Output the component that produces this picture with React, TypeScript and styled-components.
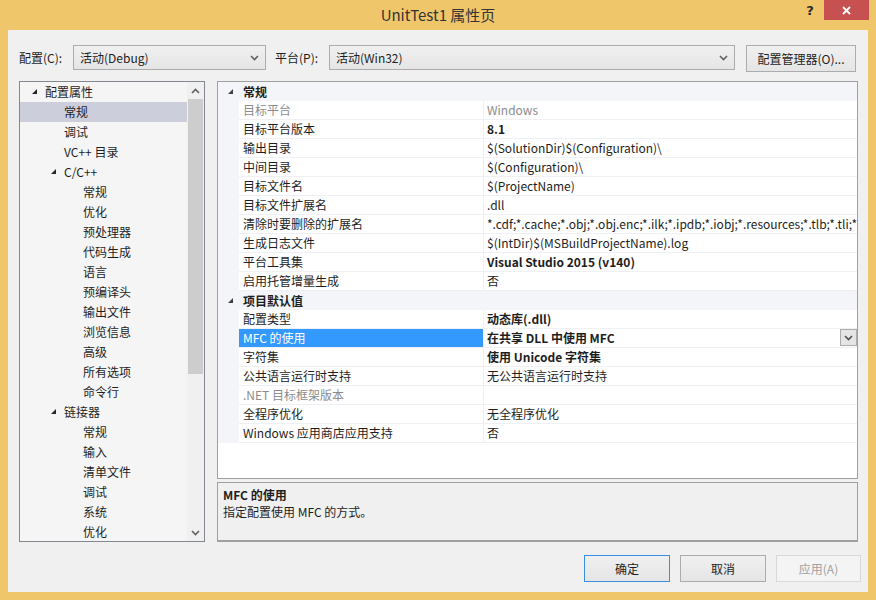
import * as React from 'react'
import styled, { createGlobalStyle } from 'styled-components'

const GlobalStyle = createGlobalStyle`
  html, body {
    margin: 0;
    padding: 0;
    background: #f0c66a;
  }
  body {
    font-family: "Noto Sans CJK SC", "Noto Sans", sans-serif;
    font-size: 12px;
    color: #1e1e1e;
  }
`

const Frame = styled.div`
  width: 876px;
  height: 600px;
  box-sizing: border-box;
  background: #f0c66a;
  display: flex;
  flex-direction: column;
`

const TitleBar = styled.div`
  height: 30px;
  display: grid;
  grid-template-columns: 1fr auto 1fr;
  align-items: start;
`

const Title = styled.div`
  grid-column: 2;
  font-size: 15px;
  line-height: 30px;
  color: #333;
`

const Controls = styled.div`
  grid-column: 3;
  justify-self: end;
  display: flex;
  align-items: flex-start;
  padding-right: 7px;
`

const HelpButton = styled.div`
  width: 28px;
  height: 20px;
  line-height: 22px;
  text-align: center;
  font-family: "DejaVu Sans", sans-serif;
  font-weight: bold;
  font-size: 13px;
  color: #2b2b2b;
`

const CloseButton = styled.div`
  width: 45px;
  height: 20px;
  background: #c75050;
  display: flex;
  align-items: center;
  justify-content: center;
`

const Client = styled.div`
  flex: 1;
  margin: 0 8px 8px 8px;
  background: #f0f0f0;
  padding: 15px 10px 0 11px;
  display: flex;
  flex-direction: column;
`

const ConfigBar = styled.div`
  display: flex;
  align-items: flex-start;
  height: 27px;
`

const FieldLabel = styled.div<{ $width: number }>`
  width: ${p => p.$width}px;
  line-height: 25px;
  flex-shrink: 0;
`

const Combo = styled.div<{ $width: number }>`
  width: ${p => p.$width}px;
  height: 25px;
  box-sizing: border-box;
  border: 1px solid #acacac;
  background: linear-gradient(#f0f0f0, #e5e5e5);
  display: flex;
  align-items: center;
  justify-content: space-between;
  padding: 0 6px 0 6px;
  margin-right: 9px;
  flex-shrink: 0;
`

const PushButton = styled.div<{ $width: number; $focused?: boolean; $disabled?: boolean }>`
  width: ${p => p.$width}px;
  height: 27px;
  box-sizing: border-box;
  border: 1px solid ${p => (p.$focused ? '#3c8fe0' : p.$disabled ? '#d9d9d9' : '#acacac')};
  background: ${p => (p.$disabled ? '#f4f4f4' : 'linear-gradient(#f0f0f0, #e5e5e5)')};
  color: ${p => (p.$disabled ? '#a0a0a0' : '#1e1e1e')};
  display: flex;
  align-items: center;
  justify-content: center;
  flex-shrink: 0;
`

const ManagerButton = styled(PushButton)`
  margin-left: 2px;
`

const Main = styled.div`
  margin-top: 9px;
  height: 461px;
  display: flex;
  gap: 12px;
`

const TreePanel = styled.div`
  width: 186px;
  box-sizing: border-box;
  border: 1px solid #828790;
  background: #f5f5f5;
  display: flex;
  overflow: hidden;
`

const TreeList = styled.div`
  flex: 1;
  overflow: hidden;
`

const TreeRow = styled.div<{ $level: number; $selected?: boolean }>`
  height: 20px;
  box-sizing: border-box;
  padding-bottom: 2px;
  display: flex;
  align-items: center;
  padding-left: ${p => 11 + p.$level * 19}px;
  background: ${p => (p.$selected ? '#cccedb' : 'transparent')};
  white-space: nowrap;
`

const Expander = styled.div`
  width: 14px;
  height: 18px;
  display: flex;
  align-items: center;
  flex-shrink: 0;
`

const ScrollBar = styled.div`
  width: 17px;
  background: #f0f0f0;
  display: flex;
  flex-direction: column;
  flex-shrink: 0;
`

const ScrollArrow = styled.div`
  height: 17px;
  display: flex;
  align-items: center;
  justify-content: center;
`

const ScrollTrack = styled.div`
  flex: 1;
  display: flex;
  flex-direction: column;
`

const ScrollThumb = styled.div<{ $height: number }>`
  height: ${p => p.$height}px;
  margin: 0 1px;
  background: #cdcdcd;
`

const RightColumn = styled.div`
  width: 641px;
  display: flex;
  flex-direction: column;
  gap: 3px;
`

const Grid = styled.div`
  height: 398px;
  box-sizing: border-box;
  border: 1px solid #a0a0a0;
  background: #fff;
  overflow: hidden;
`

const CategoryRow = styled.div`
  height: 19px;
  display: flex;
  align-items: center;
  background: #f3f5f9;
  font-weight: bold;
  color: #1e1e1e;
`

const CategoryToggle = styled.div`
  width: 21px;
  height: 19px;
  display: flex;
  align-items: center;
  padding-left: 9px;
  box-sizing: border-box;
`

const CategoryTitle = styled.span`
  padding-left: 4px;
`

const PropRow = styled.div`
  height: 19px;
  display: flex;
`

const Gutter = styled.div`
  width: 21px;
  background: #f3f5f9;
  flex-shrink: 0;
`

const NameCell = styled.div<{ $selected?: boolean; $muted?: boolean }>`
  width: 245px;
  box-sizing: border-box;
  padding-left: 4px;
  border-bottom: 1px solid #eef0f3;
  border-right: 1px solid #eef0f3;
  background: ${p => (p.$selected ? '#3399ff' : '#fff')};
  color: ${p => (p.$selected ? '#fff' : p.$muted ? '#8c8c8c' : '#1e1e1e')};
  line-height: 18px;
  white-space: nowrap;
  overflow: hidden;
  flex-shrink: 0;
`

const ValueCell = styled.div<{ $bold?: boolean; $muted?: boolean }>`
  flex: 1;
  min-width: 0;
  box-sizing: border-box;
  padding-left: 3px;
  border-bottom: 1px solid #eef0f3;
  font-weight: ${p => (p.$bold ? 'bold' : 'normal')};
  color: ${p => (p.$muted ? '#8c8c8c' : '#1e1e1e')};
  line-height: 18px;
  white-space: nowrap;
  overflow: hidden;
  display: flex;
  justify-content: space-between;
`

const DropButton = styled.div`
  width: 17px;
  height: 17px;
  box-sizing: border-box;
  border: 1px solid #acacac;
  background: #e5e5e5;
  display: flex;
  align-items: center;
  justify-content: center;
  flex-shrink: 0;
`

const Description = styled.div`
  height: 60px;
  box-sizing: border-box;
  border: 1px solid #a0a0a0;
  border-bottom: 2px solid #a0a0a0;
  background: #f0f0f0;
  padding: 3px 5px;
  line-height: 17px;
`

const DescTitle = styled.div`
  font-weight: bold;
`

const Footer = styled.div`
  margin-top: 13px;
  margin-right: -3px;
  display: flex;
  justify-content: flex-end;
  gap: 10px;
`

const Triangle = ({ color = '#262626' }: { color?: string }) => (
  <svg width="7" height="7" viewBox="0 0 7 7">
    <polygon points="6,1 6,6 1,6" fill={color} />
  </svg>
)

const Chevron = ({ up = false, color = '#606060' }: { up?: boolean; color?: string }) => (
  <svg width="9" height="6" viewBox="0 0 9 6">
    <polyline points={up ? '1,5 4.5,1.5 8,5' : '1,1 4.5,4.5 8,1'} fill="none" stroke={color} strokeWidth="1.6" />
  </svg>
)

interface TreeItem {
  label: string
  level: number
  expanded?: boolean
  selected?: boolean
}

const treeItems: TreeItem[] = [
  { label: '配置属性', level: 0, expanded: true },
  { label: '常规', level: 1, selected: true },
  { label: '调试', level: 1 },
  { label: 'VC++ 目录', level: 1 },
  { label: 'C/C++', level: 1, expanded: true },
  { label: '常规', level: 2 },
  { label: '优化', level: 2 },
  { label: '预处理器', level: 2 },
  { label: '代码生成', level: 2 },
  { label: '语言', level: 2 },
  { label: '预编译头', level: 2 },
  { label: '输出文件', level: 2 },
  { label: '浏览信息', level: 2 },
  { label: '高级', level: 2 },
  { label: '所有选项', level: 2 },
  { label: '命令行', level: 2 },
  { label: '链接器', level: 1, expanded: true },
  { label: '常规', level: 2 },
  { label: '输入', level: 2 },
  { label: '清单文件', level: 2 },
  { label: '调试', level: 2 },
  { label: '系统', level: 2 },
  { label: '优化', level: 2 },
]

interface Prop {
  name: string
  value: string
  bold?: boolean
  muted?: boolean
  selected?: boolean
}

interface Category {
  title: string
  props: Prop[]
}

const categories: Category[] = [
  {
    title: '常规',
    props: [
      { name: '目标平台', value: 'Windows', muted: true },
      { name: '目标平台版本', value: '8.1', bold: true },
      { name: '输出目录', value: '$(SolutionDir)$(Configuration)\\' },
      { name: '中间目录', value: '$(Configuration)\\' },
      { name: '目标文件名', value: '$(ProjectName)' },
      { name: '目标文件扩展名', value: '.dll' },
      { name: '清除时要删除的扩展名', value: '*.cdf;*.cache;*.obj;*.obj.enc;*.ilk;*.ipdb;*.iobj;*.resources;*.tlb;*.tli;*.tlh;*.tmp' },
      { name: '生成日志文件', value: '$(IntDir)$(MSBuildProjectName).log' },
      { name: '平台工具集', value: 'Visual Studio 2015 (v140)', bold: true },
      { name: '启用托管增量生成', value: '否' },
    ],
  },
  {
    title: '项目默认值',
    props: [
      { name: '配置类型', value: '动态库(.dll)', bold: true },
      { name: 'MFC 的使用', value: '在共享 DLL 中使用 MFC', bold: true, selected: true },
      { name: '字符集', value: '使用 Unicode 字符集', bold: true },
      { name: '公共语言运行时支持', value: '无公共语言运行时支持' },
      { name: '.NET 目标框架版本', value: '', muted: true },
      { name: '全程序优化', value: '无全程序优化' },
      { name: 'Windows 应用商店应用支持', value: '否' },
    ],
  },
]

export default function App() {
  return (
    <Frame>
      <GlobalStyle />
      <TitleBar>
        <Title>UnitTest1 属性页</Title>
        <Controls>
          <HelpButton>?</HelpButton>
          <CloseButton>
            <svg width="9" height="9" viewBox="0 0 9 9">
              <path d="M1 1 L8 8 M8 1 L1 8" stroke="#fff" strokeWidth="1.8" />
            </svg>
          </CloseButton>
        </Controls>
      </TitleBar>
      <Client>
        <ConfigBar>
          <FieldLabel $width={54}>配置(C):</FieldLabel>
          <Combo $width={193}>
            <span>活动(Debug)</span>
            <Chevron />
          </Combo>
          <FieldLabel $width={54}>平台(P):</FieldLabel>
          <Combo $width={406}>
            <span>活动(Win32)</span>
            <Chevron />
          </Combo>
          <ManagerButton $width={110}>配置管理器(O)...</ManagerButton>
        </ConfigBar>
        <Main>
          <TreePanel>
            <TreeList>
              {treeItems.map((item, i) => (
                <TreeRow key={i} $level={item.level} $selected={item.selected}>
                  <Expander>{item.expanded ? <Triangle /> : null}</Expander>
                  {item.label}
                </TreeRow>
              ))}
            </TreeList>
            <ScrollBar>
              <ScrollArrow><Chevron up /></ScrollArrow>
              <ScrollTrack>
                <ScrollThumb $height={275} />
              </ScrollTrack>
              <ScrollArrow><Chevron /></ScrollArrow>
            </ScrollBar>
          </TreePanel>
          <RightColumn>
            <Grid>
              {categories.map(cat => (
                <React.Fragment key={cat.title}>
                  <CategoryRow>
                    <CategoryToggle><Triangle color="#404040" /></CategoryToggle>
                    <CategoryTitle>{cat.title}</CategoryTitle>
                  </CategoryRow>
                  {cat.props.map(p => (
                    <PropRow key={p.name}>
                      <Gutter />
                      <NameCell $selected={p.selected} $muted={p.muted}>{p.name}</NameCell>
                      <ValueCell $bold={p.bold} $muted={p.muted}>
                        <span>{p.value}</span>
                        {p.selected ? (
                          <DropButton><Chevron color="#505050" /></DropButton>
                        ) : null}
                      </ValueCell>
                    </PropRow>
                  ))}
                </React.Fragment>
              ))}
            </Grid>
            <Description>
              <DescTitle>MFC 的使用</DescTitle>
              <div>指定配置使用 MFC 的方式。</div>
            </Description>
          </RightColumn>
        </Main>
        <Footer>
          <PushButton $width={86} $focused>确定</PushButton>
          <PushButton $width={86}>取消</PushButton>
          <PushButton $width={85} $disabled>应用(A)</PushButton>
        </Footer>
      </Client>
    </Frame>
  )
}
